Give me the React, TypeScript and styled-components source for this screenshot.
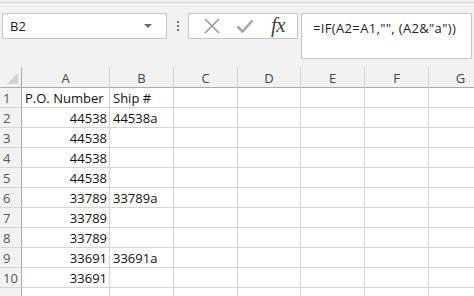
import React from "react";
import styled, { createGlobalStyle } from "styled-components";

const Global = createGlobalStyle`
  html, body { margin: 0; padding: 0; }
  body {
    width: 474px; height: 296px; overflow: hidden;
    background: #f2f2f2;
    font-family: "Open Sans", "Noto Sans", sans-serif;
  }
`;

const Page = styled.div`
  width: 474px;
  height: 296px;
  overflow: hidden;
  display: flex;
  flex-direction: column;
`;

const TopBar = styled.div`
  height: 65px;
  flex: none;
  border-top: 1px solid #d6d6d6;
  margin-top: 2px;
  box-sizing: border-box;
  display: flex;
  align-items: flex-start;
  padding: 10px 2px 0 2px;
  background: #f2f2f2;
`;

const NameBox = styled.div`
  width: 165px;
  height: 26px;
  box-sizing: border-box;
  border: 1px solid #c6c6c6;
  background: #fff;
  display: flex;
  align-items: center;
  justify-content: space-between;
  padding: 0 14px 0 7px;
  font-size: 13px;
  color: #222;
`;

const Arrow = styled.span`
  width: 0; height: 0;
  border-left: 4px solid transparent;
  border-right: 4px solid transparent;
  border-top: 4px solid #6a6a6a;
`;

const Dots = styled.div`
  width: 21px;
  height: 26px;
  display: flex;
  flex-direction: column;
  align-items: center;
  justify-content: center;
  gap: 2px;
  & > span { width: 2px; height: 2px; background: #6f6f6f; display: block; }
`;

const ButtonBox = styled.div`
  width: 110px;
  height: 26px;
  box-sizing: border-box;
  border: 1px solid #c6c6c6;
  background: #fff;
  display: flex;
  align-items: center;
  padding: 0 0 0 8px;
`;

const IconSlot = styled.div<{ $w: number }>`
  width: ${(p) => p.$w}px;
  height: 24px;
  display: flex;
  align-items: center;
  justify-content: center;
`;

const Fx = styled.span`
  font-family: "Liberation Serif", "DejaVu Serif", serif;
  font-style: italic;
  font-size: 21px;
  color: #444;
  letter-spacing: -0.5px;
  line-height: 1;
  margin-top: -2px;
`;

const FormulaBox = styled.div`
  margin-left: 3px;
  flex: 1;
  height: 46px;
  box-sizing: border-box;
  border: 1px solid #c6c6c6;
  background: #fff;
  padding: 5px 0 0 11px;
  font-size: 13px;
  letter-spacing: 0.35px;
  color: #222;
  white-space: pre;
`;

const Sheet = styled.div`
  display: grid;
  grid-template-columns: 22px 88px 64px 64px 63px 64px 64px 64px;
  grid-template-rows: 21px;
  grid-auto-rows: 20px;
  background: #fff;
  flex: 1;
  overflow: hidden;
`;

const ColHead = styled.div`
  background: #f2f2f2;
  border-right: 1px solid #d4d4d4;
  border-bottom: 1px solid #ababab;
  box-sizing: border-box;
  display: flex;
  align-items: center;
  justify-content: center;
  font-size: 13px;
  color: #444;
  padding-top: 1px;
`;

const Corner = styled.div`
  background: #f2f2f2;
  border-right: 1px solid #ababab;
  border-bottom: 1px solid #ababab;
  box-sizing: border-box;
  position: relative;
  &::after {
    content: "";
    position: absolute;
    right: 3px;
    bottom: 3px;
    width: 0; height: 0;
    border-left: 11px solid transparent;
    border-bottom: 11px solid #d2d2d2;
  }
`;

const RowHead = styled.div`
  background: #f2f2f2;
  border-right: 1px solid #ababab;
  border-bottom: 1px solid #d4d4d4;
  box-sizing: border-box;
  display: flex;
  align-items: center;
  padding-left: 3px;
  font-size: 13px;
  color: #555;
`;

const Cell = styled.div<{ $num?: boolean }>`
  border-right: 1px solid #d4d4d4;
  border-bottom: 1px solid #d4d4d4;
  box-sizing: border-box;
  display: flex;
  align-items: center;
  justify-content: ${(p) => (p.$num ? "flex-end" : "flex-start")};
  padding: 0 2px 0 3px;
  font-size: 13px;
  color: #111;
  white-space: nowrap;
`;

const cols = ["A", "B", "C", "D", "E", "F", "G"];

const rows: [string, string | number, string][] = [
  ["1", "P.O. Number", "Ship #"],
  ["2", 44538, "44538a"],
  ["3", 44538, ""],
  ["4", 44538, ""],
  ["5", 44538, ""],
  ["6", 33789, "33789a"],
  ["7", 33789, ""],
  ["8", 33789, ""],
  ["9", 33691, "33691a"],
  ["10", 33691, ""],
  ["11", "", ""],
];

export default function App() {
  return (
    <Page>
      <Global />
      <TopBar>
        <NameBox>
          <span>B2</span>
          <Arrow />
        </NameBox>
        <Dots>
          <span />
          <span />
          <span />
        </Dots>
        <ButtonBox>
          <IconSlot $w={30}>
            <svg width="18" height="16" viewBox="0 0 18 16">
              <path d="M2 1 L16 15 M16 1 L2 15" stroke="#9a9a9a" strokeWidth="1.6" fill="none" />
            </svg>
          </IconSlot>
          <IconSlot $w={36}>
            <svg width="18" height="14" viewBox="0 0 18 14">
              <path d="M1.5 7.5 L6.5 12.5 L16.5 1.5" stroke="#a8a8a8" strokeWidth="2.6" fill="none" />
            </svg>
          </IconSlot>
          <IconSlot $w={30}>
            <Fx>fx</Fx>
          </IconSlot>
        </ButtonBox>
        <FormulaBox>{'=IF(A2=A1,"", (A2&"a"))'}</FormulaBox>
      </TopBar>
      <Sheet>
        <Corner />
        {cols.map((c) => (
          <ColHead key={c}>{c}</ColHead>
        ))}
        {rows.map(([n, a, b]) => (
          <React.Fragment key={n}>
            <RowHead>{n === "11" ? "" : n}</RowHead>
            <Cell $num={typeof a === "number"}>{a}</Cell>
            <Cell>{b}</Cell>
            {cols.slice(2).map((c) => (
              <Cell key={c} />
            ))}
          </React.Fragment>
        ))}
      </Sheet>
    </Page>
  );
}
